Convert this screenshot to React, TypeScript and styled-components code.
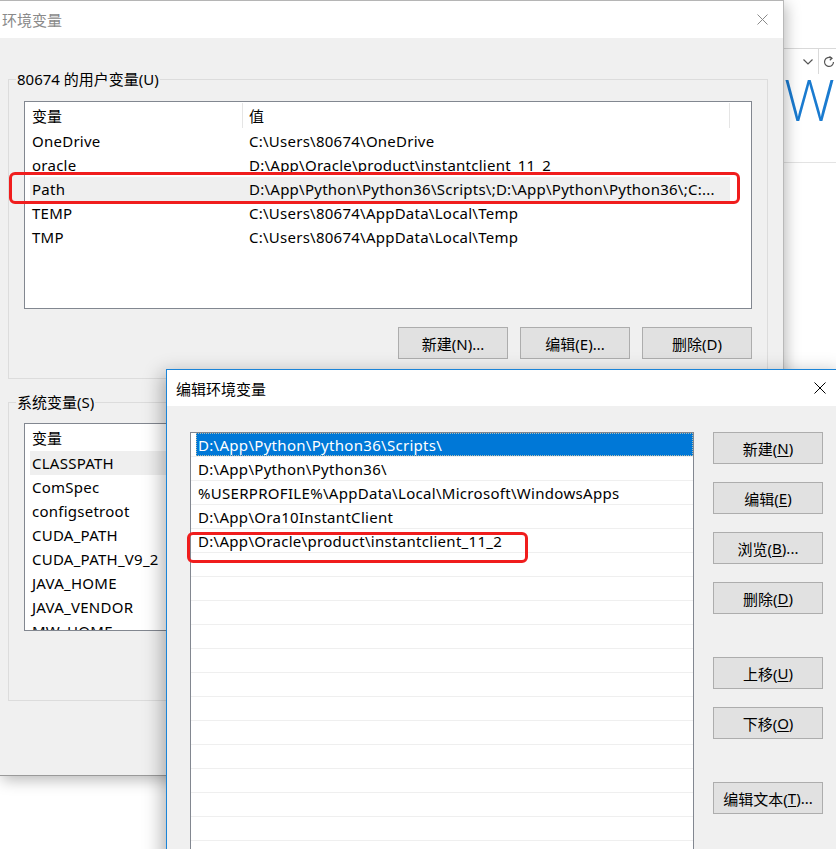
import React from "react";
import styled, { createGlobalStyle } from "styled-components";

const Global = createGlobalStyle`
  html, body { margin: 0; padding: 0; background: #fff; }
  body {
    font-family: "Noto Sans", "Noto Sans CJK SC", sans-serif;
    font-size: 15px;
    color: #000;
  }
  * { box-sizing: border-box; }
`;

const Desktop = styled.div`
  position: relative;
  width: 836px;
  height: 849px;
  overflow: hidden;
  background: #fff;
`;

/* ---------- background app (right edge) ---------- */
const BgWindow = styled.div`
  position: absolute;
  left: 784px;
  top: 0;
  width: 52px;
  height: 849px;
  background: #fff;
  display: flex;
  flex-direction: column;
`;

const AddressRow = styled.div`
  margin-top: 48px;
  height: 26px;
  display: flex;
  border-top: 1px solid #d9d9d9;
`;

const DropSeg = styled.div`
  width: 41px;
  display: flex;
  align-items: center;
  justify-content: flex-end;
  padding-right: 5px;
  border-right: 1px solid #d9d9d9;
`;

const RefreshSeg = styled.div`
  flex: 1;
  display: flex;
  align-items: center;
  padding-left: 3px;
`;

const BigHeading = styled.div`
  margin-top: -6px;
  height: 62px;
  font-family: "Open Sans", "Noto Sans", sans-serif;
  font-weight: 300;
  font-size: 57px;
  line-height: 62px;
  color: #1a7bd0;
  white-space: nowrap;
`;

const BgDivider = styled.div`
  margin-top: 32px;
  border-top: 1px solid #e3e3e3;
`;

/* ---------- windows ---------- */
const MainWindow = styled.div`
  position: absolute;
  left: 0;
  top: 0;
  width: 784px;
  height: 776px;
  background: #f0f0f0;
  border-top: 1px solid #b5b5b5;
  border-right: 1px solid #b9b9b9;
  border-bottom: 1px solid #9a9a9a;
  box-shadow: 2px 4px 14px rgba(0, 0, 0, 0.28);
  display: flex;
  flex-direction: column;
`;

const TitleBar = styled.div<{ $active?: boolean; $pad: number; $h: number }>`
  flex: none;
  height: ${(p) => p.$h}px;
  background: #fff;
  display: flex;
  align-items: center;
  justify-content: space-between;
  padding-left: ${(p) => p.$pad}px;
  color: ${(p) => (p.$active ? "#000" : "#8a8a8a")};
  font-size: 15px;
`;

const CloseBtn = styled.div<{ $w: number }>`
  width: ${(p) => p.$w}px;
  height: 100%;
  display: flex;
  align-items: center;
  justify-content: center;
`;

const MainBody = styled.div`
  flex: 1;
  padding: 41px 15px 0 8px;
  display: flex;
  flex-direction: column;
`;

const Group = styled.div<{ $mt: number }>`
  margin-top: ${(p) => p.$mt}px;
  border: 1px solid #dcdcdc;
  padding: 0 15px 19px 15px;
  display: flex;
  flex-direction: column;
`;

const Legend = styled.div<{ $gap: number }>`
  align-self: flex-start;
  margin: -11px 0 ${(p) => p.$gap}px -8px;
  padding: 0 1px;
  line-height: 20px;
  background: #f0f0f0;
  white-space: nowrap;
`;

const ListView = styled.div`
  height: 208px;
  background: #fff;
  border: 1px solid #828790;
  padding-left: 5px;
  overflow: hidden;
`;

const HeadRow = styled.div`
  display: flex;
  height: 27px;
`;

const HeadCell = styled.div<{ $w: number; $pl: number }>`
  width: ${(p) => p.$w}px;
  padding-left: ${(p) => p.$pl}px;
  display: flex;
  align-items: center;
  border-right: 1px solid #e5e5e5;
  margin: 1px 0 1px 0;
`;

const Row = styled.div<{ $hl?: boolean }>`
  display: flex;
  height: 24px;
  width: 700px;
  align-items: center;
  background: ${(p) => (p.$hl ? "#efefef" : "transparent")};
`;

const Cell = styled.div<{ $w: number; $pl: number }>`
  width: ${(p) => p.$w}px;
  padding-left: ${(p) => p.$pl}px;
  white-space: nowrap;
  overflow: hidden;
  letter-spacing: 0.25px;
`;

const ButtonRow = styled.div`
  margin-top: 18px;
  display: flex;
  justify-content: flex-end;
  gap: 12px;
`;

const Button = styled.div<{ $extra?: number }>`
  width: 110px;
  height: 32px;
  flex: none;
  margin-top: ${(p) => p.$extra || 0}px;
  background: #e1e1e1;
  border: 1px solid #adadad;
  display: flex;
  align-items: center;
  justify-content: center;
  white-space: nowrap;
  font-size: 15px;
  u { text-decoration-thickness: 1px; text-underline-offset: 2px; }
`;

const DialogFooter = styled.div`
  margin-top: 18px;
  display: flex;
  justify-content: flex-end;
  gap: 12px;
`;

/* ---------- edit dialog ---------- */
const EditWindow = styled.div`
  position: absolute;
  left: 166px;
  top: 369px;
  width: 678px;
  height: 520px;
  background: #f0f0f0;
  border: 1px solid #1a84d8;
  box-shadow: -4px 4px 18px rgba(0, 0, 0, 0.3);
  display: flex;
  flex-direction: column;
`;

const EditBody = styled.div`
  flex: 1;
  display: flex;
  gap: 19px;
  padding: 26px 20px 0 23px;
`;

const PathList = styled.div`
  width: 504px;
  align-self: stretch;
  background: #fff;
  border: 1px solid #828790;
  overflow: hidden;
`;

const PathRow = styled.div`
  height: 24px;
  padding-left: 5px;
  border-bottom: 1px solid #efefef;
  display: flex;
`;

const PathItem = styled.div<{ $sel?: boolean }>`
  flex: 1;
  padding-left: 2px;
  display: flex;
  align-items: center;
  white-space: nowrap;
  letter-spacing: 0.3px;
  background: ${(p) => (p.$sel ? "#0078d7" : "transparent")};
  color: ${(p) => (p.$sel ? "#fff" : "#000")};
  outline: ${(p) => (p.$sel ? "1px dotted rgba(255,220,160,0.7)" : "none")};
  outline-offset: -1px;
`;

const SideButtons = styled.div`
  display: flex;
  flex-direction: column;
  gap: 18px;
`;

const Annotation = styled.div<{ $x: number; $y: number; $w: number; $h: number }>`
  position: absolute;
  left: ${(p) => p.$x}px;
  top: ${(p) => p.$y}px;
  width: ${(p) => p.$w}px;
  height: ${(p) => p.$h}px;
  border: 3px solid #f01d1d;
  border-radius: 6px;
  pointer-events: none;
`;

const userVars: [string, string][] = [
  ["OneDrive", "C:\\Users\\80674\\OneDrive"],
  ["oracle", "D:\\App\\Oracle\\product\\instantclient_11_2"],
  ["Path", "D:\\App\\Python\\Python36\\Scripts\\;D:\\App\\Python\\Python36\\;C:..."],
  ["TEMP", "C:\\Users\\80674\\AppData\\Local\\Temp"],
  ["TMP", "C:\\Users\\80674\\AppData\\Local\\Temp"],
];

const sysVars: [string, string][] = [
  ["CLASSPATH", ".;%JAVA_HOME%\\lib;%JAVA_HOME%\\lib\\tools.jar"],
  ["ComSpec", "C:\\WINDOWS\\system32\\cmd.exe"],
  ["configsetroot", "C:\\WINDOWS\\ConfigSetRoot"],
  ["CUDA_PATH", "C:\\Program Files\\NVIDIA GPU Computing Toolkit\\CUDA\\v9.2"],
  ["CUDA_PATH_V9_2", "C:\\Program Files\\NVIDIA GPU Computing Toolkit\\CUDA\\v9.2"],
  ["JAVA_HOME", "C:\\Program Files\\Java\\jdk1.8.0"],
  ["JAVA_VENDOR", "Oracle"],
  ["MW_HOME", "D:\\App\\Oracle\\Middleware"],
];

const paths = [
  "D:\\App\\Python\\Python36\\Scripts\\",
  "D:\\App\\Python\\Python36\\",
  "%USERPROFILE%\\AppData\\Local\\Microsoft\\WindowsApps",
  "D:\\App\\Ora10InstantClient",
  "D:\\App\\Oracle\\product\\instantclient_11_2",
];

const CloseIcon = ({ size, color }: { size: number; color: string }) => (
  <svg width={size} height={size} viewBox={`0 0 ${size} ${size}`}>
    <path d={`M0.5 0.5 L${size - 0.5} ${size - 0.5} M${size - 0.5} 0.5 L0.5 ${size - 0.5}`} stroke={color} strokeWidth="1" fill="none" />
  </svg>
);

const VarList = ({ rows, hl }: { rows: [string, string][]; hl: number }) => (
  <ListView>
    <HeadRow>
      <HeadCell $w={213} $pl={2}>变量</HeadCell>
      <HeadCell $w={487} $pl={6}>值</HeadCell>
    </HeadRow>
    {rows.map(([k, v], i) => (
      <Row key={k} $hl={i === hl}>
        <Cell $w={213} $pl={2}>{k}</Cell>
        <Cell $w={487} $pl={6}>{v}</Cell>
      </Row>
    ))}
  </ListView>
);

export default function App() {
  const emptyRows = Array.from({ length: 14 });
  return (
    <Desktop>
      <Global />
      <BgWindow>
        <AddressRow>
          <DropSeg>
            <svg width="10" height="6" viewBox="0 0 10 6">
              <path d="M0.5 0.5 L5 5 L9.5 0.5" stroke="#555" strokeWidth="1.2" fill="none" />
            </svg>
          </DropSeg>
          <RefreshSeg>
            <svg width="14" height="14" viewBox="0 0 14 14">
              <path d="M11.5 7 A4.5 4.5 0 1 1 9.5 3.2" stroke="#555" strokeWidth="1.2" fill="none" />
              <path d="M7.5 1.5 L10 3.3 L7.8 5.2" stroke="#555" strokeWidth="1.2" fill="none" />
            </svg>
          </RefreshSeg>
        </AddressRow>
        <BigHeading>W</BigHeading>
        <BgDivider />
      </BgWindow>

      <MainWindow>
        <TitleBar $pad={2} $h={37}>
          环境变量
          <CloseBtn $w={42}>
            <CloseIcon size={11} color="#8a8a8a" />
          </CloseBtn>
        </TitleBar>
        <MainBody>
          <Group $mt={0}>
            <Legend $gap={12}>80674 的用户变量(U)</Legend>
            <VarList rows={userVars} hl={2} />
            <ButtonRow>
              <Button>新建(N)...</Button>
              <Button>编辑(E)...</Button>
              <Button>删除(D)</Button>
            </ButtonRow>
          </Group>
          <Group $mt={23}>
            <Legend $gap={11}>系统变量(S)</Legend>
            <VarList rows={sysVars} hl={0} />
            <ButtonRow>
              <Button>新建(W)...</Button>
              <Button>编辑(I)...</Button>
              <Button>删除(L)</Button>
            </ButtonRow>
          </Group>
          <DialogFooter>
            <Button>确定</Button>
            <Button>取消</Button>
          </DialogFooter>
        </MainBody>
      </MainWindow>

      <EditWindow>
        <TitleBar $active $pad={9} $h={36}>
          编辑环境变量
          <CloseBtn $w={46}>
            <CloseIcon size={12} color="#000" />
          </CloseBtn>
        </TitleBar>
        <EditBody>
          <PathList>
            {paths.map((p, i) => (
              <PathRow key={p}>
                <PathItem $sel={i === 0}>{p}</PathItem>
              </PathRow>
            ))}
            {emptyRows.map((_, i) => (
              <PathRow key={"e" + i}>
                <PathItem />
              </PathRow>
            ))}
          </PathList>
          <SideButtons>
            <Button>新建(<u>N</u>)</Button>
            <Button>编辑(<u>E</u>)</Button>
            <Button>浏览(<u>B</u>)...</Button>
            <Button>删除(<u>D</u>)</Button>
            <Button $extra={25}>上移(<u>U</u>)</Button>
            <Button>下移(<u>O</u>)</Button>
            <Button $extra={25}>编辑文本(<u>T</u>)...</Button>
          </SideButtons>
        </EditBody>
      </EditWindow>

      <Annotation $x={9} $y={172} $w={731} $h={32} />
      <Annotation $x={187} $y={532} $w={341} $h={31} />
    </Desktop>
  );
}
